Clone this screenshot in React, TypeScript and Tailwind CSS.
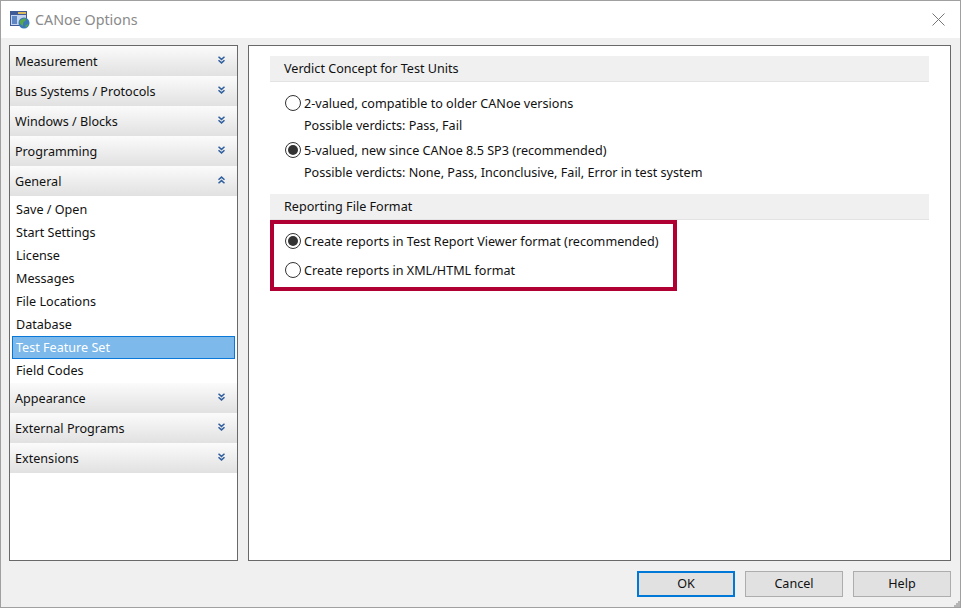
import { Fragment } from 'react';

const topGroups = ['Measurement', 'Bus Systems / Protocols', 'Windows / Blocks', 'Programming'];
const generalItems = ['Save / Open', 'Start Settings', 'License', 'Messages', 'File Locations', 'Database', 'Test Feature Set', 'Field Codes'];
const bottomGroups = ['Appearance', 'External Programs', 'Extensions'];

function Chevrons({ up }: { up?: boolean }) {
  return (
    <svg width="7" height="8" viewBox="0 0 7 8" className={up ? 'rotate-180' : ''} fill="none" stroke="#2f5f9e" strokeWidth="1.5">
      <path d="M0.5 0.8 3.5 3.4 6.5 0.8" />
      <path d="M0.5 4.2 3.5 6.9 6.5 4.2" />
    </svg>
  );
}

function GroupHeader({ label, open }: { label: string; open?: boolean }) {
  return (
    <div className="flex h-[30px] items-center justify-between bg-gradient-to-b from-[#fbfbfb] to-[#e1e1e1] pl-[5px] pr-[12px] text-[#111]">
      <span className="mt-[2px]">{label}</span>
      <span className="-mt-[2px]">
        <Chevrons up={open} />
      </span>
    </div>
  );
}

function Radio({ checked }: { checked?: boolean }) {
  return (
    <span className="flex h-4 w-4 shrink-0 items-center justify-center rounded-full border border-[#333] bg-white">
      {checked && <span className="h-[10px] w-[10px] rounded-full bg-[#333]" />}
    </span>
  );
}

function RadioRow({ label, checked, className }: { label: string; checked?: boolean; className?: string }) {
  return (
    <div className={`flex items-center gap-[3px] ${className ?? ''}`}>
      <Radio checked={checked} />
      <span className="mt-[2px]">{label}</span>
    </div>
  );
}

function SectionTitle({ label }: { label: string }) {
  return <div className="flex h-[26px] items-center border-b border-[#e3e3e3] bg-[#f0f0f0] pl-[14px] pt-[2px]">{label}</div>;
}

function DialogButton({ label, primary }: { label: string; primary?: boolean }) {
  return (
    <button className={`h-[26px] w-[98px] bg-[#e1e1e1] text-[#111] ${primary ? 'border-2 border-[#0078d7]' : 'border border-[#adadad]'}`}>
      {label}
    </button>
  );
}

export default function App() {
  return (
    <div className="relative flex h-[608px] w-[961px] flex-col overflow-hidden border border-[#a0a0a0] bg-[#f0f0f0] font-['Noto_Sans',sans-serif] text-[12.6px] text-[#111]">
      {/* Title bar */}
      <div className="flex h-[37px] shrink-0 items-center justify-between bg-white pl-[9px] pr-[15px]">
        <div className="flex items-center gap-[4px]">
          <svg width="21" height="19" viewBox="0 0 21 19">
            <rect x="0.5" y="1.5" width="16" height="14" fill="#c4d4ee" stroke="#3f5a96" />
            <rect x="1" y="2" width="15" height="3" fill="#3f5a96" />
            <rect x="8" y="2" width="8" height="2" fill="#d9b95a" />
            <rect x="2" y="6" width="5" height="8" fill="#5f86c4" />
            <circle cx="14" cy="13" r="5.500" fill="#3b78b8" />
            <path d="M9.500 11.500c1.500-2.500 4-3.500 6-3 1 1.500-.5 3-1.500 3s-.5 3-1.500 4.500c-1.500-1-3-3-3-4.500Z" fill="#58a84a" />
            <path d="M15.500 15.500c1-1 2-1.500 3-1.500-.4 1.800-1.500 3-3 3.500Z" fill="#58a84a" />
          </svg>
          <span className="text-[14.3px] text-[#8a8a8a]">CANoe Options</span>
        </div>
        <svg width="13" height="13" viewBox="0 0 13 13" stroke="#777" strokeWidth="1">
          <path d="M0.500 0.500 12.500 12.500M12.500 0.500 0.500 12.500" />
        </svg>
      </div>

      <div className="flex h-[523px] shrink-0 gap-[10px] pl-[8px] pr-[9px] pt-[7px]">
        {/* Category tree */}
        <div className="h-[516px] w-[229px] shrink-0 border border-[#696969] bg-white">
          {topGroups.map((g) => (
            <GroupHeader key={g} label={g} />
          ))}
          <GroupHeader label="General" open />
          <div className="flex flex-col px-[2px] pt-[2px]">
            {generalItems.map((item) =>
              item === 'Test Feature Set' ? (
                <div key={item} className="flex h-[23px] items-center border border-[#0a78d7] bg-[#7db9ea] pl-[3px] pt-[2px] text-white">
                  {item}
                </div>
              ) : (
                <div key={item} className="flex h-[23px] items-center pl-[4px] pt-[2px]">
                  {item}
                </div>
              ),
            )}
          </div>
          <div className="mt-[1px]">
            {bottomGroups.map((g) => (
              <Fragment key={g}>
                <GroupHeader label={g} />
              </Fragment>
            ))}
          </div>
        </div>

        {/* Settings page */}
        <div className="h-[516px] w-[703px] shrink-0 border border-[#696969] bg-white px-[21px] pt-[10px]">
          <SectionTitle label="Verdict Concept for Test Units" />
          <RadioRow className="ml-[15px] mt-[11px] h-[20px]" label="2-valued, compatible to older CANoe versions" />
          <div className="ml-[34px] mt-[2px] flex h-[20px] items-center pt-[2px]">Possible verdicts: Pass, Fail</div>
          <RadioRow className="ml-[15px] mt-[5px] h-[20px]" label="5-valued, new since CANoe 8.5 SP3 (recommended)" checked />
          <div className="ml-[34px] mt-[2px] flex h-[20px] items-center pt-[2px]">Possible verdicts: None, Pass, Inconclusive, Fail, Error in test system</div>
          <div className="mt-[12px]">
            <SectionTitle label="Reporting File Format" />
          </div>
          <div className="h-[71px] w-[407px] border-4 border-[#b00033] pl-[11px] pt-[7px]">
            <RadioRow className="h-[20px]" label="Create reports in Test Report Viewer format (recommended)" checked />
            <RadioRow className="mt-[9px] h-[20px]" label="Create reports in XML/HTML format" />
          </div>
        </div>
      </div>

      {/* Footer buttons */}
      <div className="flex justify-end gap-[10px] pr-[9px] pt-[10px]">
        <DialogButton label="OK" primary />
        <DialogButton label="Cancel" />
        <DialogButton label="Help" />
      </div>

      {/* Resize grip */}
      <svg width="6" height="6" viewBox="0 0 6 6" fill="#b5b5b5" className="absolute bottom-0 right-0">
        <rect x="4" y="0" width="2" height="2" />
        <rect x="2" y="2" width="2" height="2" />
        <rect x="4" y="2" width="2" height="2" />
        <rect x="0" y="4" width="2" height="2" />
        <rect x="2" y="4" width="2" height="2" />
        <rect x="4" y="4" width="2" height="2" />
      </svg>
    </div>
  );
}
